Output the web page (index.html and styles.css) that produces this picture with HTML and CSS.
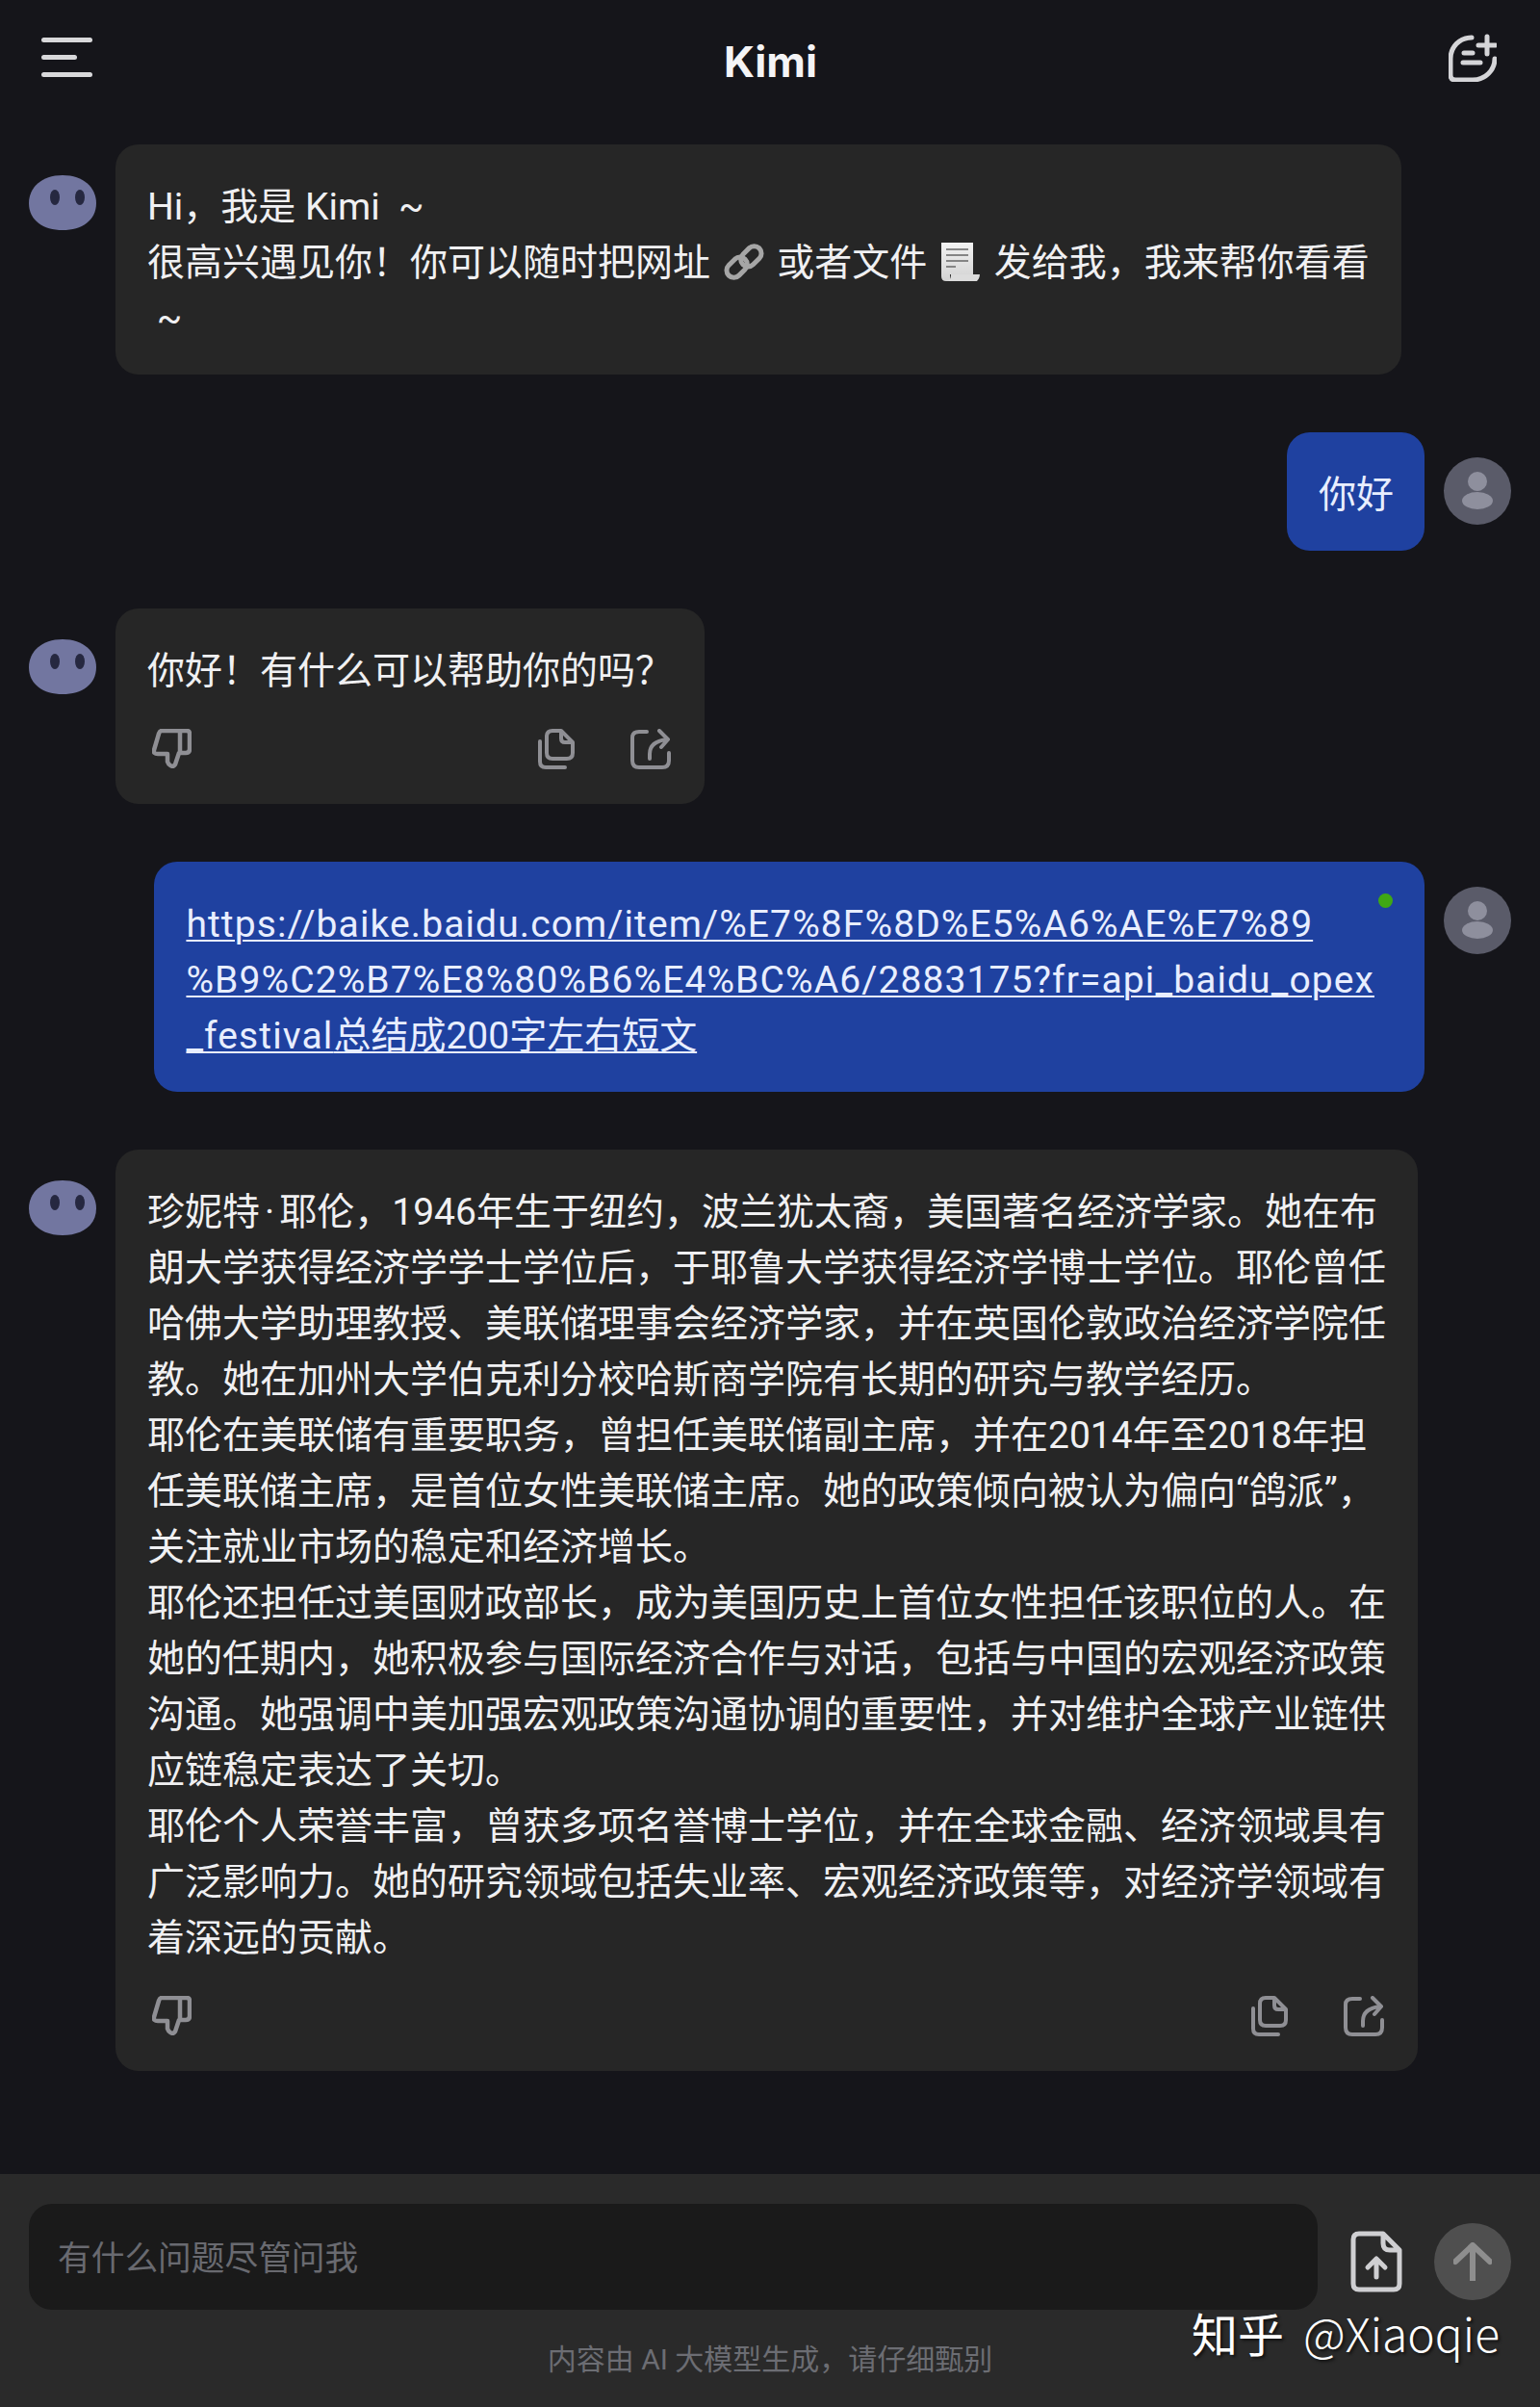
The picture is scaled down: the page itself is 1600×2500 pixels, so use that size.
FILE: index.html
```html
<!DOCTYPE html>
<html lang="zh-CN">
<head>
<meta charset="utf-8">
<title>Kimi</title>
<link rel="stylesheet" href="styles.css">
</head>
<body>
<svg class="defs" width="0" height="0" aria-hidden="true">
  <defs>
    <symbol id="pig" viewBox="0 0 70 57">
      <path d="M35 0C57 0 70 13 70 29C70 47 55 57 35 57C15 57 0 47 0 29C0 13 13 0 35 0Z" fill="#7276a0"/>
      <ellipse cx="27" cy="23" rx="5" ry="8" fill="#262840"/>
      <ellipse cx="53" cy="23" rx="5" ry="8" fill="#262840"/>
    </symbol>
    <symbol id="user" viewBox="0 0 70 70">
      <circle cx="35" cy="35" r="35" fill="#5a5b69"/>
      <circle cx="35" cy="25" r="10" fill="#8e8f9d"/>
      <ellipse cx="35" cy="45" rx="16" ry="9" fill="#8e8f9d"/>
    </symbol>
    <symbol id="down" viewBox="0 0 41 41">
      <path d="M10 2H36Q39 2 39 5V21Q39 25 35 25H28L24 37Q22 40 19 38Q17 37 16 34L16 26H6Q1 26 2 22L7 5Q8 2 10 2ZM29 2V25" fill="none" stroke="#8f8f94" stroke-width="4.5" stroke-linejoin="round"/>
    </symbol>
    <symbol id="copy" viewBox="0 0 38 42">
      <path d="M2 13V34Q2 40 8 40H28" fill="none" stroke="#8f8f94" stroke-width="4" stroke-linecap="round"/>
      <path d="M24 2H15Q9 2 9 8V25Q9 31 15 31H30Q36 31 36 25V14ZM24 2V10Q24 14 28 14H36" fill="none" stroke="#8f8f94" stroke-width="4" stroke-linejoin="round"/>
    </symbol>
    <symbol id="share" viewBox="0 0 42 42">
      <path d="M17 3H9Q2 3 2 9V33Q2 40 9 40H33Q40 40 40 33V25" fill="none" stroke="#8f8f94" stroke-width="4" stroke-linecap="round"/>
      <path d="M20 31V26Q20 13 38 11M30 2L39 11L32 19" fill="none" stroke="#8f8f94" stroke-width="4" stroke-linecap="round" stroke-linejoin="round"/>
    </symbol>
    <linearGradient id="paper" x1="0" y1="0" x2="0" y2="1">
      <stop offset="0" stop-color="#f2f2f2"/>
      <stop offset="1" stop-color="#d2d2d2"/>
    </linearGradient>
  </defs>
</svg>

<div class="app">
  <header class="topbar">
    <div class="menu" aria-label="菜单"><span class="bar"></span><span class="bar short"></span><span class="bar"></span></div>
    <h1 class="title">Kimi</h1>
    <svg class="newchat" viewBox="0 0 50 50">
      <path d="M24 4C11 4 2 14 2 26V43Q2 48 7 48H25C38 48 48 38 48 26" fill="none" stroke="#d5d5d8" stroke-width="5" stroke-linecap="round"/>
      <path d="M40 3V21M31 12H49M16 20H25M15 30H33" fill="none" stroke="#d5d5d8" stroke-width="5" stroke-linecap="round"/>
    </svg>
  </header>

  <main class="chat">
    <div class="row">
      <svg class="pig"><use href="#pig"/></svg>
      <div class="bubble ai">Hi，我是 Kimi &nbsp;~<br>很高兴遇见你！你可以随时把网址 <svg class="emoji" viewBox="0 0 42 42"><g fill="none" stroke="#a6a6a6" stroke-width="5"><rect x="2" y="19" width="24" height="15" rx="7.5" transform="rotate(-45 14 27)"/><rect x="16" y="8" width="24" height="15" rx="7.5" transform="rotate(-45 28 15)"/></g></svg> 或者文件 <svg class="emoji" viewBox="0 0 42 42"><path d="M1 1H34V34H10V41H6Q1 41 1 36Z" fill="url(#paper)"/><path d="M8 41Q11 39 11 34H41Q41 38 38 41Z" fill="#dcdcdc"/><path d="M6 8H29M6 14H29M6 20H29M6 26H16" stroke="#858585" stroke-width="2"/></svg> 发给我，我来帮你看看<br>&nbsp;~</div>
    </div>

    <div class="row end">
      <div class="bubble me">你好</div>
      <svg class="avatar"><use href="#user"/></svg>
    </div>

    <div class="row">
      <svg class="pig"><use href="#pig"/></svg>
      <div class="bubble ai">你好！有什么可以帮助你的吗？
        <div class="actions">
          <svg class="ic-down"><use href="#down"/></svg>
          <div class="actions-right">
            <svg class="ic-copy"><use href="#copy"/></svg>
            <svg class="ic-share"><use href="#share"/></svg>
          </div>
        </div>
      </div>
    </div>

    <div class="row end">
      <div class="bubble me has-dot">
        <span class="dot"></span>
        <a class="link" href="#"><span class="url">https://baike.baidu.com/item/%E7%8F%8D%E5%A6%AE%E7%89<br>%B9%C2%B7%E8%80%B6%E4%BC%A6/2883175?fr=api_baidu_opex<br>_festival</span>总结成200字左右短文</a>
      </div>
      <svg class="avatar"><use href="#user"/></svg>
    </div>

    <div class="row">
      <svg class="pig"><use href="#pig"/></svg>
      <div class="bubble ai">珍妮特<span class="middot">·</span>耶伦，1946年生于纽约，波兰犹太裔，美国著名经济学家。她在布<br>朗大学获得经济学学士学位后，于耶鲁大学获得经济学博士学位。耶伦曾任<br>哈佛大学助理教授、美联储理事会经济学家，并在英国伦敦政治经济学院任<br>教。她在加州大学伯克利分校哈斯商学院有长期的研究与教学经历。<br>耶伦在美联储有重要职务，曾担任美联储副主席，并在2014年至2018年担<br>任美联储主席，是首位女性美联储主席。她的政策倾向被认为偏向“鸽派”，<br>关注就业市场的稳定和经济增长。<br>耶伦还担任过美国财政部长，成为美国历史上首位女性担任该职位的人。在<br>她的任期内，她积极参与国际经济合作与对话，包括与中国的宏观经济政策<br>沟通。她强调中美加强宏观政策沟通协调的重要性，并对维护全球产业链供<br>应链稳定表达了关切。<br>耶伦个人荣誉丰富，曾获多项名誉博士学位，并在全球金融、经济领域具有<br>广泛影响力。她的研究领域包括失业率、宏观经济政策等，对经济学领域有<br>着深远的贡献。
        <div class="actions">
          <svg class="ic-down"><use href="#down"/></svg>
          <div class="actions-right">
            <svg class="ic-copy"><use href="#copy"/></svg>
            <svg class="ic-share"><use href="#share"/></svg>
          </div>
        </div>
      </div>
    </div>
  </main>

  <footer class="composer">
    <div class="composer-row">
      <div class="input">有什么问题尽管问我</div>
      <div class="tools">
        <svg class="upload" viewBox="0 0 54 64">
          <path d="M34 3H9Q3 3 3 9V55Q3 61 9 61H45Q51 61 51 55V20ZM34 3V13Q34 20 41 20H51" fill="none" stroke="#cfcfd2" stroke-width="5" stroke-linejoin="round"/>
          <path d="M27 48V31M18 38L27 29L36 38" fill="none" stroke="#cfcfd2" stroke-width="5" stroke-linecap="round" stroke-linejoin="round"/>
        </svg>
        <div class="send">
          <svg class="send-arrow" viewBox="0 0 40 40"><path d="M20 40V3M2 20L20 3L38 20" fill="none" stroke="#8e8e8e" stroke-width="6" stroke-linejoin="round" stroke-linecap="round"/></svg>
        </div>
      </div>
    </div>
    <p class="notice">内容由 AI 大模型生成，请仔细甄别</p>
  </footer>
  <div class="watermark">知乎<span class="handle">@Xiaoqie</span></div>
</div>
</body>
</html>
```
FILE: styles.css
```css
* { box-sizing: border-box; }
html, body { margin: 0; padding: 0; }
body {
  background: #15151a;
  color: #f0f0f2;
  font-family: Roboto, "Noto Sans CJK SC", sans-serif;
}
.defs { position: absolute; }
.app {
  position: relative;
  width: 1600px;
  height: 2500px;
  display: flex;
  flex-direction: column;
  overflow: hidden;
}
.topbar {
  height: 150px;
  flex: none;
  padding: 35px 45px 0 43px;
  display: flex;
  justify-content: space-between;
  align-items: flex-start;
}
.menu { width: 53px; padding-top: 4px; display: flex; flex-direction: column; gap: 13px; }
.bar { display: block; height: 5px; background: #d8d8da; border-radius: 3px; }
.bar.short { width: 37px; }
.title {
  margin: 2px 0 0;
  font-family: Inter, sans-serif;
  font-size: 44.5px;
  line-height: 54px;
  font-weight: 700;
  color: #f4f4f6;
}
.newchat { width: 50px; height: 50px; }
.chat {
  flex: 1;
  padding: 0 30px;
  display: flex;
  flex-direction: column;
  gap: 60px;
}
.row { display: flex; align-items: flex-start; gap: 20px; }
.row.end { justify-content: flex-end; }
.pig { width: 70px; height: 57px; flex: none; margin-top: 32px; }
.avatar { width: 70px; height: 70px; flex: none; margin-top: 26px; }
.bubble {
  position: relative;
  padding: 36px 33px 29px;
  font-size: 39px;
  line-height: 58px;
  white-space: nowrap;
  border-radius: 24px;
}
.bubble.ai { background: #262626; color: #f0f0f2; }
.bubble.me { background: #1f41a0; color: #e8eeff; padding-right: 32px; }
.bubble.has-dot { padding-right: 52px; }
.dot {
  position: absolute;
  top: 33px;
  right: 33px;
  width: 15px;
  height: 15px;
  border-radius: 50%;
  background: #3fa814;
}
.link {
  color: inherit;
  text-decoration: underline;
  text-decoration-thickness: 2px;
  text-underline-offset: 3px;
}
.url { letter-spacing: 1.1px; }
.middot { margin: 0 5px; }
.emoji { width: 42px; height: 42px; vertical-align: -7px; margin: 0 4px; }
.actions {
  display: flex;
  justify-content: space-between;
  align-items: flex-start;
  margin: 31px 2px 7px 5px;
}
.actions-right { display: flex; gap: 58px; }
.ic-down { width: 41px; height: 41px; }
.ic-copy { width: 38px; height: 42px; }
.ic-share { width: 42px; height: 42px; }
.composer {
  flex: none;
  height: 242px;
  background: #2a2a2a;
  padding: 31px 30px 0;
}
.composer-row { display: flex; align-items: flex-start; gap: 34px; }
.input {
  flex: 1;
  height: 110px;
  padding: 0 30px 2px;
  display: flex;
  align-items: center;
  background: #1a1a1a;
  border-radius: 24px;
  font-size: 34.7px;
  color: #696a70;
}
.tools { display: flex; align-items: center; gap: 33px; padding-top: 20px; }
.upload { width: 54px; height: 64px; }
.send {
  width: 80px;
  height: 80px;
  border-radius: 50%;
  background: #4f4f4f;
  display: flex;
  align-items: center;
  justify-content: center;
}
.send-arrow { width: 40px; height: 40px; }
.notice {
  margin: 32px 0 0;
  text-align: center;
  font-size: 30px;
  line-height: 40px;
  color: #6c6d73;
}
.watermark {
  position: absolute;
  right: 42px;
  top: 2390px;
  font-family: "Noto Sans CJK SC", sans-serif;
  font-size: 48px;
  line-height: 64px;
  color: #fff;
  text-shadow: 2px 2px 3px #111;
}
.handle { margin-left: 20px; font-weight: 300; }
```
